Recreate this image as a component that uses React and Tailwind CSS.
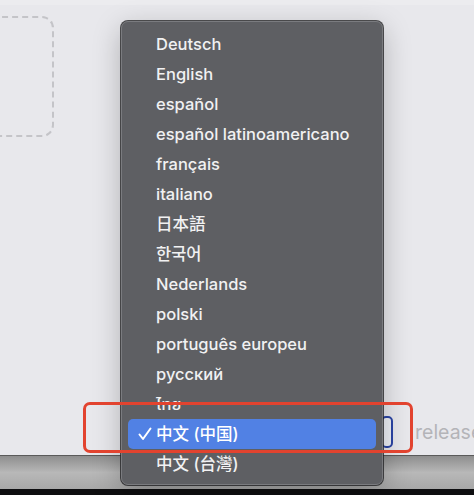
import React from "react";

const items = [
  "Deutsch",
  "English",
  "español",
  "español latinoamericano",
  "français",
  "italiano",
  "日本語",
  "한국어",
  "Nederlands",
  "polski",
  "português europeu",
  "русский",
  "ไทย",
  "中文 (中国)",
  "中文 (台灣)",
];

export default function App() {
  return (
    <div
      className="relative w-[474px] h-[495px] overflow-hidden flex flex-col bg-[#e8e8ec]"
      style={{ fontFamily: 'Inter, "Noto Sans", "Noto Sans CJK SC", "Noto Sans Thai", sans-serif' }}
    >
      {/* main area */}
      <div className="relative h-[455px] bg-[#e8e8ec] border-t-[5px] border-[#ececef]">
        <div className="ml-[-20px] mt-[11px] w-[74px] h-[121px] rounded-[12px] border-2 border-dashed border-[#c4c4c8]" />
        <div className="flex items-center mt-[279px] ml-[381px] gap-[22px] whitespace-nowrap">
          <div className="w-[12px] h-[32px] shrink-0 rounded-[5px] border-2 border-[#2b45a6] bg-[#eef0f6]" />
          <span className="text-[19.5px] text-[#b4b4b8] leading-none mt-[2px]">release</span>
        </div>
      </div>
      <div className="h-[1px] bg-[#5a5a5a]" />
      <div className="h-[33px] bg-gradient-to-b from-[#8e8e8e] via-[#b8b8b8] to-[#a8a8a8]" />
      <div className="flex-1 bg-[#0e0e10]" />

      {/* menu */}
      <div className="absolute left-[121px] top-[21px] w-[262px] h-[464px] rounded-[7px] bg-[#5e5f63] border border-[#7a7b7f] shadow-[0_8px_28px_rgba(0,0,0,0.25),0_0_0_1px_rgba(40,40,42,0.8)] pt-[7px] px-[6px]">
        {items.map((t) => {
          const sel = t === "中文 (中国)";
          return (
            <div
              key={t}
              className={`relative h-[30px] flex items-center rounded-[5px] pl-[28px] text-[16.5px] font-medium ${
                sel ? "bg-[#5181e4] text-white" : "text-[#f1f1f2]"
              }`}
            >
              {sel && (
                <svg className="absolute left-[10px] top-[8px]" width="14" height="14" viewBox="0 0 14 14">
                  <path d="M1.5 7.5 L5 12 L12.5 1.5" fill="none" stroke="white" strokeWidth="2" strokeLinecap="round" strokeLinejoin="round" />
                </svg>
              )}
              {t}
            </div>
          );
        })}
      </div>

      {/* red annotation box */}
      <div className="absolute left-[83px] top-[402px] w-[330px] h-[51px] rounded-[7px] border-[3px] border-[#e2432f]" />
    </div>
  );
}
